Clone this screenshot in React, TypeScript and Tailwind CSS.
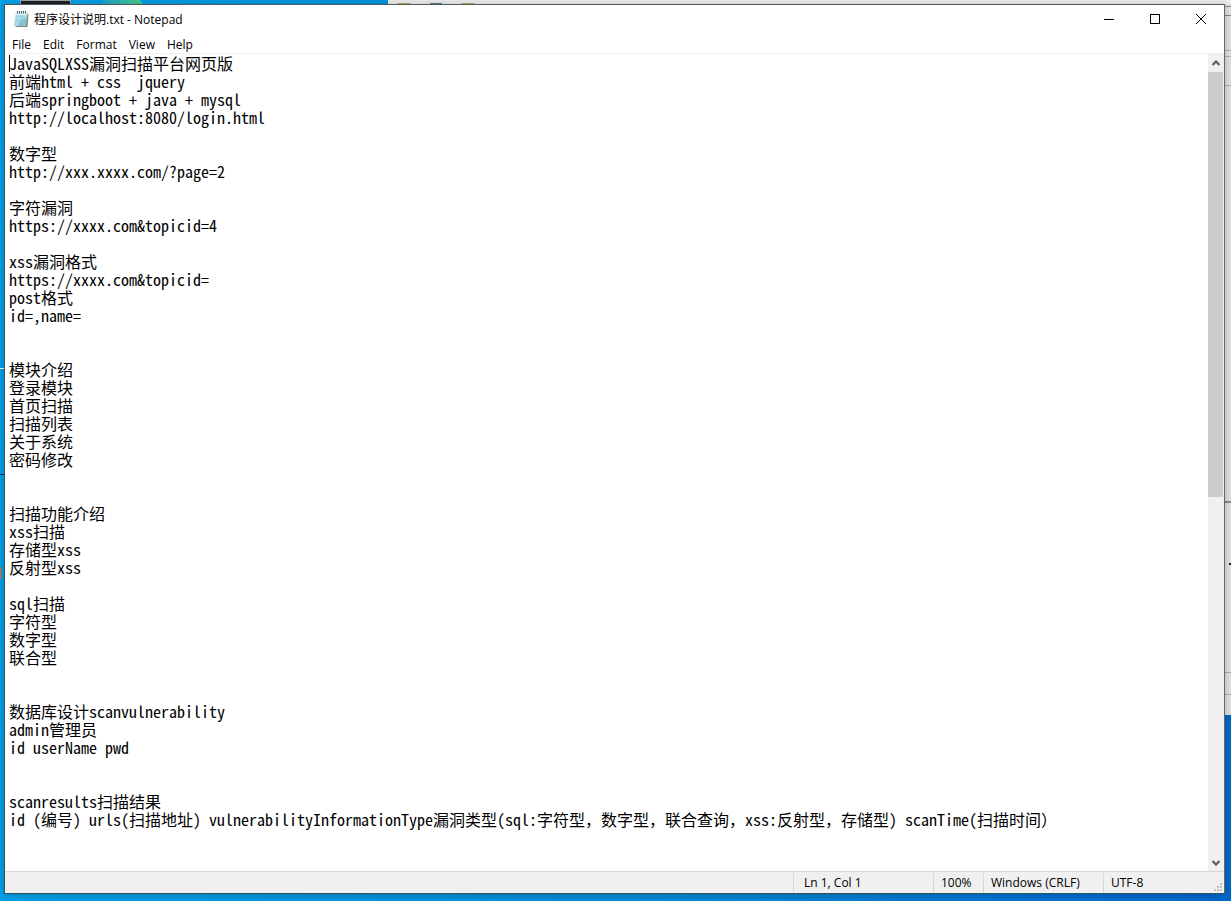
import { useEffect, useRef } from 'react'

const content = `JavaSQLXSS漏洞扫描平台网页版
前端html + css  jquery
后端springboot + java + mysql
http://localhost:8080/login.html

数字型
http://xxx.xxxx.com/?page=2

字符漏洞
https://xxxx.com&topicid=4

xss漏洞格式
https://xxxx.com&topicid=
post格式
id=,name=


模块介绍
登录模块
首页扫描
扫描列表
关于系统
密码修改


扫描功能介绍
xss扫描
存储型xss
反射型xss

sql扫描
字符型
数字型
联合型


数据库设计scanvulnerability
admin管理员
id userName pwd


scanresults扫描结果
id (编号) urls(扫描地址) vulnerabilityInformationType漏洞类型(sql:字符型，数字型，联合查询，xss:反射型，存储型) scanTime(扫描时间）
`

const menus = ['File', 'Edit', 'Format', 'View', 'Help']

function NotepadIcon() {
  return (
    <svg width="16" height="17" viewBox="0 0 16 17" aria-hidden="true">
      <path d="M14 2l1.5 1-1 13H3l-1-1z" fill="#8f8568" />
      <path d="M3 1.5h11.5L13 15H.8z" fill="#a9dcea" />
      <path d="M3 1.5h11.5l-.3 2.5H2.6z" fill="#d9eff5" />
      <path d="M8 8l5.6-.5L13 15H5z" fill="#63b4cd" opacity=".6" />
      <path d="M3 6h10M2.6 8.5h10M2.3 11h10" stroke="#8cc8d8" strokeWidth=".7" />
      <path d="M4.5 0v2.5M6.5 0v2.5M8.5 0v2.5M10.5 0v2.5M12.5 0v2.5" stroke="#47606a" strokeWidth="1" />
    </svg>
  )
}

function WindowControls() {
  return (
    <div className="ml-auto flex h-full text-black">
      <button aria-label="Minimize" className="flex w-[46px] items-center justify-center hover:bg-gray-200">
        <svg width="10" height="10" shapeRendering="crispEdges"><path d="M0 4h10v1H0z" /></svg>
      </button>
      <button aria-label="Maximize" className="flex w-[46px] items-center justify-center pb-px hover:bg-gray-200">
        <svg width="10" height="10" fill="none" stroke="currentColor" shapeRendering="crispEdges">
          <path d="M.5.5h9v9h-9z" />
        </svg>
      </button>
      <button aria-label="Close" className="flex w-[46px] items-center justify-center pb-px hover:bg-red-600">
        <svg width="10" height="10" stroke="currentColor"><path d="M0 0l10 10M10 0L0 10" /></svg>
      </button>
    </div>
  )
}

function ScrollBar() {
  return (
    <div className="flex w-4 shrink-0 flex-col bg-[#f0f0f0] pr-px">
      <button aria-label="Scroll up" className="flex h-[18px] items-center justify-center">
        <svg width="8" height="6" fill="none" stroke="#555" strokeWidth="2"><path d="M.5 5L4 1.5 7.5 5" /></svg>
      </button>
      <div className="flex-1">
        <div className="h-[54.3%] bg-[#cdcdcd]" />
      </div>
      <button aria-label="Scroll down" className="flex h-[17px] items-center justify-center">
        <svg width="8" height="6" fill="none" stroke="#555" strokeWidth="2"><path d="M.5 1L4 4.5 7.5 1" /></svg>
      </button>
    </div>
  )
}

function StatusBar() {
  return (
    <footer className="flex h-[22px] shrink-0 justify-end border-t border-[#d7d7d7] bg-[#f0f0f0] pt-px">
      <span className="w-[140px] border-l border-[#d7d7d7] pl-[10px] leading-5">Ln 1, Col 1</span>
      <span className="w-[50px] border-l border-[#d7d7d7] pl-[7px] leading-5">100%</span>
      <span className="w-[120px] border-l border-[#d7d7d7] pl-[7px] leading-5">Windows (CRLF)</span>
      <span className="flex w-[121px] items-end justify-between border-l border-[#d7d7d7] pr-[2px] pl-[7px] leading-5">
        UTF-8
        <svg width="8" height="8" fill="#bfbfbf" className="mb-[2px]" shapeRendering="crispEdges">
          <path d="M6 0h2v2H6zM3 3h2v2H3zM6 3h2v2H6zM0 6h2v2H0zM3 6h2v2H3zM6 6h2v2H6z" />
        </svg>
      </span>
    </footer>
  )
}

// Whatever peeks out from behind the notepad window
function Desktop() {
  return (
    <div aria-hidden="true" className="absolute inset-0 overflow-hidden">
      <div className="absolute top-0 left-5 h-4 w-[51px] border-x border-t border-gray-400 bg-[#222]" />
      <div className="absolute -top-2 left-[98px] size-12 rounded-full bg-gradient-to-r from-[#1aa0d8] to-[#4fd07a]" />
      <div className="absolute top-[368px] left-0 h-px w-1 bg-white" />
      <div className="absolute top-[474px] left-0 h-px w-1 bg-[#123]" />
      <div className="absolute top-[567px] left-0 h-3 w-[2px] bg-[#8c8478]" />
      <div className="absolute top-0 right-0 left-[388px] h-[715px] bg-[#e2e2e2]">
        <div className="flex h-1 gap-5 bg-[#eee] pl-[10px]">
          <div className="mt-[3px] w-3 bg-[#c9ad55]" />
          <div className="mt-[3px] w-3 bg-gray-500" />
          <div className="mt-[3px] w-3 bg-[#c9ad55]" />
        </div>
        <div className="mt-[2px] h-[10px] border-y border-[#888]" />
        <div className="mt-[34px] h-[7px] border-y border-[#b5b5b5]" />
        <div className="mt-[28px] border-t border-[#b5b5b5]" />
        <div className="mt-[415px] border-t-2 border-[#8a8a8a]" />
        <div className="mt-[60px] ml-auto h-[2px] w-[2px] bg-[#123]" />
        <div className="mt-[107px] h-[23px] border-y border-[#aaa]" />
      </div>
    </div>
  )
}

export default function App() {
  const editor = useRef<HTMLTextAreaElement>(null)

  useEffect(() => {
    editor.current?.setSelectionRange(0, 0)
  }, [])

  return (
    <div className="relative flex h-screen bg-gradient-to-r from-[#00a2ea] via-[#008ddb] to-[#0068cc] pt-1 pr-[6px] pb-[7px] pl-1 font-['Open_Sans','Noto_Sans_CJK_SC',sans-serif] text-xs text-black">
      <Desktop />
      <main className="relative flex min-w-0 flex-1 flex-col border border-[#2f5564] border-t-[#4c5b60] border-r-[#666] bg-white shadow-[0_1px_8px_rgba(0,0,0,0.25)]">
        <header className="flex h-[29px] shrink-0 items-center pl-2">
          <NotepadIcon />
          <h1 className="ml-[5px]">程序设计说明.txt - Notepad</h1>
          <WindowControls />
        </header>
        <nav className="flex h-5 shrink-0 items-center border-b border-[#f0f0f0] pt-[2px] pl-[7px]">
          {menus.map(m => (
            <button key={m} className="mr-3 leading-4">{m}</button>
          ))}
        </nav>
        <div className="flex min-h-0 flex-1">
          <div className="relative min-w-0 flex-1">
            <textarea
              ref={editor}
              aria-label="Text editor"
              spellCheck={false}
              wrap="off"
              defaultValue={content}
              className="block size-full resize-none overflow-hidden bg-white pl-1 font-['Noto_Sans_Mono_CJK_SC','Liberation_Mono','Noto_Sans_CJK_SC',monospace] text-base leading-[18px] font-light outline-none"
            />
            <span className="absolute top-px left-1 h-[17px] w-px bg-black" />
          </div>
          <ScrollBar />
        </div>
        <StatusBar />
      </main>
    </div>
  )
}
